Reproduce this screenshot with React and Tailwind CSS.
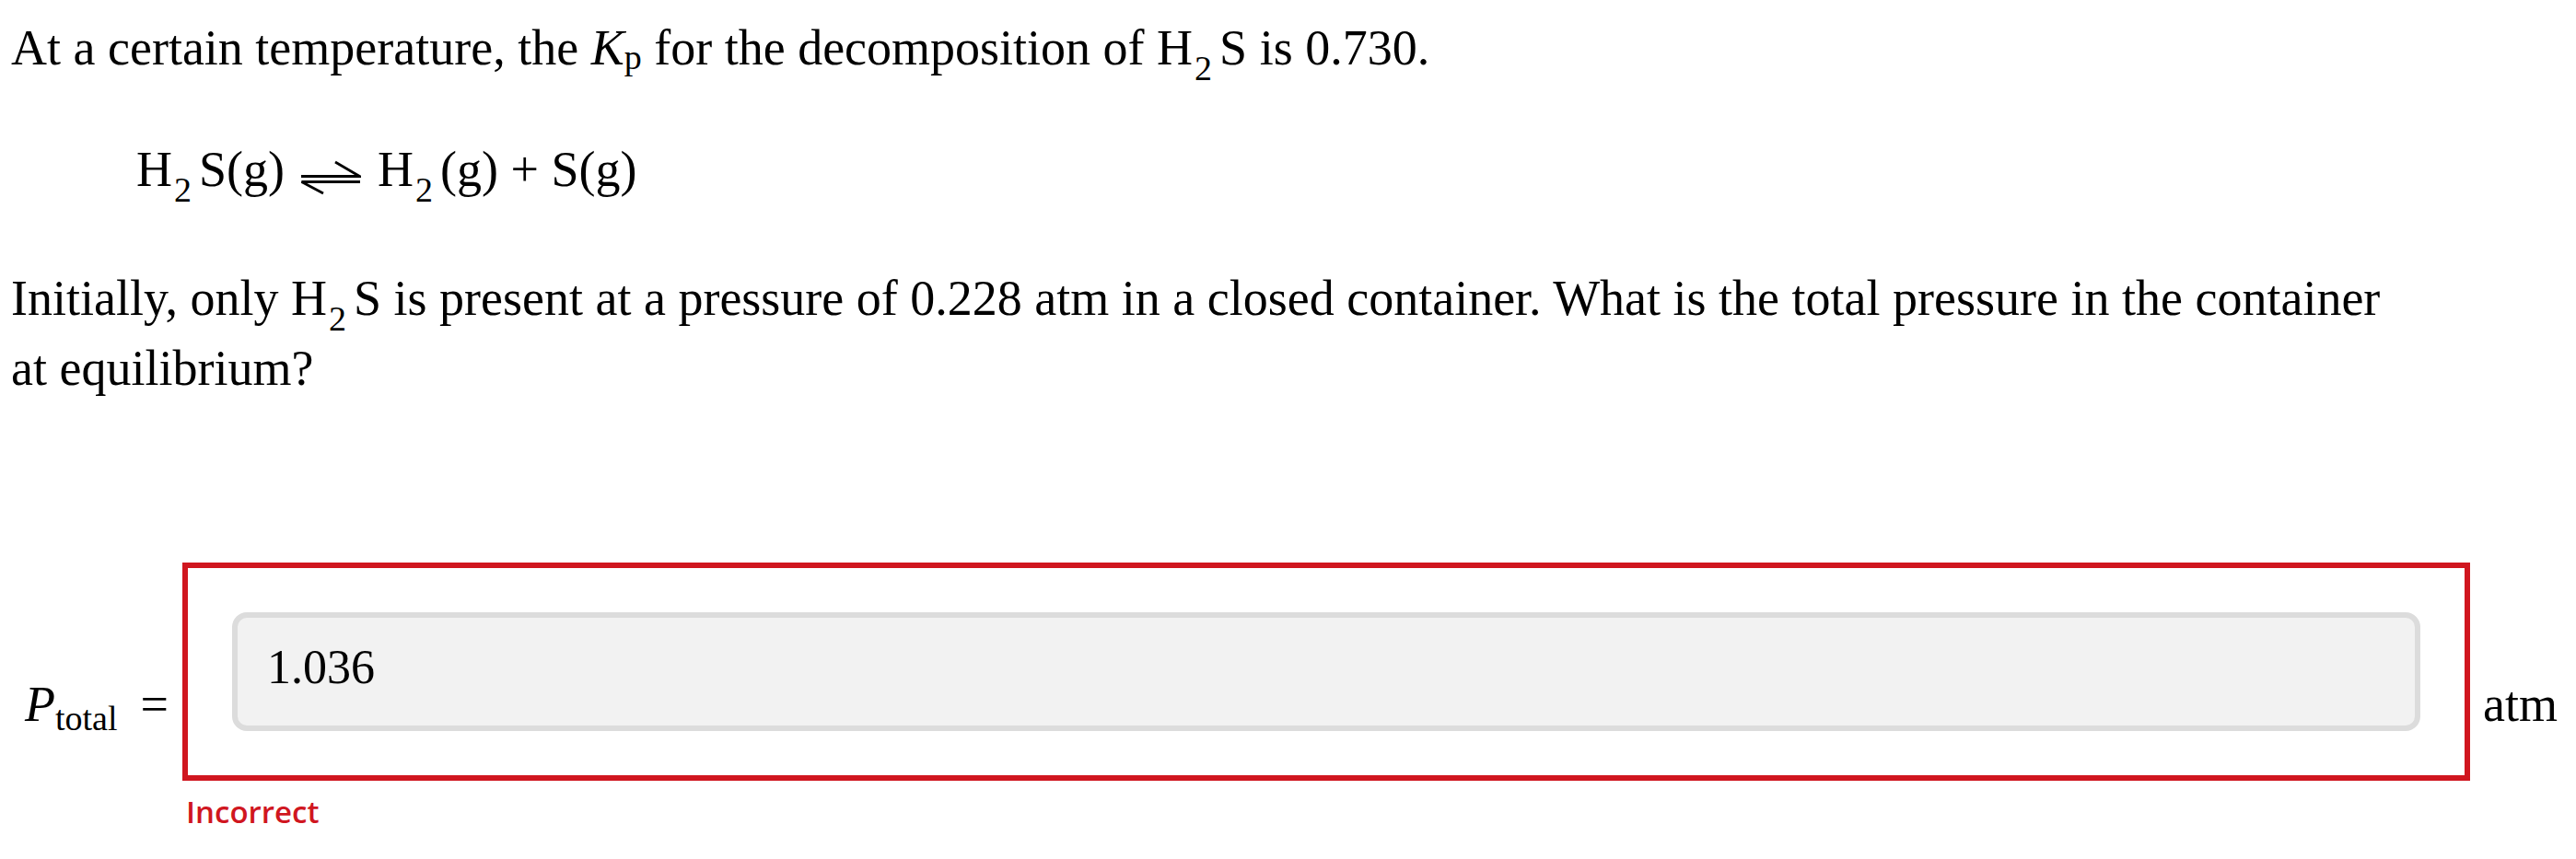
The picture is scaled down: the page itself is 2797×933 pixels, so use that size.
import React from "react";

function Arrow() {
  return (
    <svg
      width="66"
      height="42"
      viewBox="0 0 66 42"
      className="inline-block align-[-10px] ml-[17px] mr-[18px]"
    >
      <path d="M1 21.5 H64.5 L38 6" fill="none" stroke="#000" strokeWidth="2.8" strokeLinejoin="miter" />
      <path d="M65 27.5 H1.5 L25 40" fill="none" stroke="#000" strokeWidth="2.8" strokeLinejoin="miter" />
    </svg>
  );
}

export default function App() {
  return (
    <div className="min-h-screen w-full bg-white text-black font-['Liberation_Serif','Times_New_Roman',serif]">
      <div className="pl-[12px] pt-[14px]">
        <p className="text-[54px] leading-[76px] whitespace-nowrap">
          At a certain temperature, the <i>K</i>
          <span className="relative top-[5px] text-[38px] leading-none">p</span> for the decomposition of H
          <span className="relative top-[17px] text-[38px] leading-none ml-[2px] mr-[8px]">2</span>S is 0.730.
        </p>

        <div className="mt-[56px] pl-[136px] text-[54px] leading-[76px] whitespace-nowrap">
          H<span className="relative top-[17px] text-[38px] leading-none ml-[2px] mr-[8px]">2</span>S(g)
          <Arrow />
          H<span className="relative top-[17px] text-[38px] leading-none ml-[2px] mr-[8px]">2</span>(g) + S(g)
        </div>

        <p className="mt-[64px] w-[2600px] text-[54px] leading-[76px]">
          Initially, only H
          <span className="relative top-[17px] text-[38px] leading-none ml-[2px] mr-[8px]">2</span>S is present at a
          pressure of 0.228 atm in a closed container. What is the total pressure in the container at
          equilibrium?
        </p>
      </div>

      <div className="mt-[173px] flex items-start">
        <div className="w-[198px] shrink-0 flex justify-end pr-[15px] mt-[124px] text-[54px] leading-[60px] whitespace-nowrap">
          <span>
            <i>P</i>
            <span className="relative top-[10px] text-[38px] leading-none">total</span>
          </span>
          <span className="ml-[25px]">=</span>
        </div>

        <div className="flex flex-col">
          <div className="w-[2484px] h-[237px] border-[6px] border-[#d0161f] p-[48px]">
            <div className="h-[129px] rounded-[16px] border-[6px] border-[#dcdcdc] bg-[#f2f2f2] flex items-center pl-[32px] pb-[10px] text-[52px] leading-none">
              1.036
            </div>
          </div>
          <div className="mt-[14px] pl-[4px] text-[33px] leading-[40px] font-semibold text-[#d0161f] font-['Open_Sans','Noto_Sans',sans-serif]">
            Incorrect
          </div>
        </div>

        <div className="ml-[14px] mt-[124px] text-[54px] leading-[60px]">atm</div>
      </div>
    </div>
  );
}
